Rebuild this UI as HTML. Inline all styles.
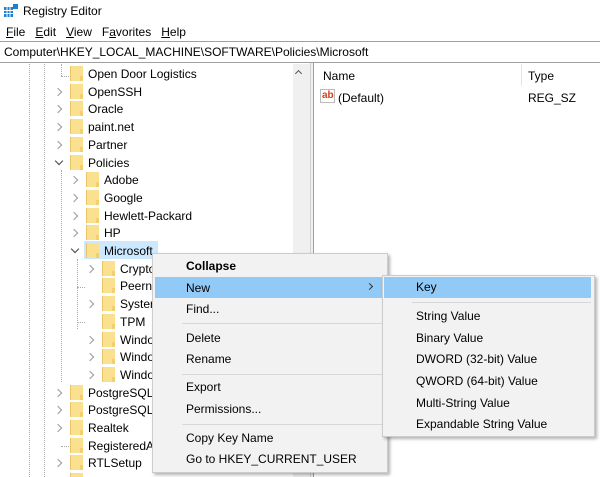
<!DOCTYPE html>
<html><head><style>
*{margin:0;padding:0;box-sizing:border-box}
html,body{width:600px;height:477px;overflow:hidden}
body{background:#fff;font-family:"Liberation Sans",sans-serif;font-size:12px;color:#000;position:relative}
.a{position:absolute;white-space:nowrap}
.f{position:absolute;width:13px;height:15px;background:#fbe08f;border-left:1px solid #e9c565}
.f:after{content:"";position:absolute;right:0;bottom:0;width:3px;height:5px;background:#f3cf6d}
.c{position:absolute;width:6px;height:6px;border-right:1.2px solid #999;border-bottom:1.2px solid #999;transform:rotate(-45deg)}
.d{position:absolute;width:6px;height:6px;border-right:1.2px solid #444;border-bottom:1.2px solid #444;transform:rotate(45deg)}
.vl{position:absolute;border-left:1px dotted #aaa}
.hl{position:absolute;border-top:1px dotted #aaa;width:8px}
.sep{position:absolute;height:1px;background:#d7d7d7}
</style></head><body>
<div class="a" style="left:4px;top:4px;width:14px;height:13px">
<svg width="14" height="13"><rect x="0" y="3" width="9" height="10" fill="#1e7fd0"/><g stroke="#fff" stroke-width="1"><line x1="3" y1="3" x2="3" y2="13"/><line x1="6" y1="3" x2="6" y2="13"/><line x1="0" y1="6.5" x2="9" y2="6.5"/><line x1="0" y1="9.5" x2="9" y2="9.5"/></g><rect x="9" y="0" width="5" height="5" fill="#1e7fd0"/></svg></div>
<div class="a" style="left:23px;top:4px">Registry Editor</div>
<div class="a" style="left:6px;top:25px"><u>F</u>ile&nbsp;&nbsp;&nbsp;<u>E</u>dit&nbsp;&nbsp;&nbsp;<u>V</u>iew&nbsp;&nbsp;&nbsp;F<u>a</u>vorites&nbsp;&nbsp;&nbsp;<u>H</u>elp</div>
<div class="a" style="left:0;top:41px;width:600px;height:22px;border:1px solid #a0a0a0;border-left:none;border-right:none"></div>
<div class="a" style="left:4px;top:45px">Computer\HKEY_LOCAL_MACHINE\SOFTWARE\Policies\Microsoft</div>
<div class="a" style="left:293px;top:64px;width:17px;height:413px;background:#f0f0f0"></div>
<div class="a" style="left:296px;top:71px;width:5px;height:5px;border-left:1.2px solid #555;border-top:1.2px solid #555;transform:rotate(45deg)"></div>
<div class="a" style="left:310px;top:63px;width:4px;height:414px;background:#f0f0f0;border-left:1px solid #d0d0d0;border-right:1px solid #a0a0a0"></div>
<div class="a" style="left:323px;top:69px">Name</div>
<div class="a" style="left:521px;top:64px;width:1px;height:22px;background:#e5e5e5"></div>
<div class="a" style="left:528px;top:69px">Type</div>
<div class="a" style="left:320px;top:89px;width:15px;height:14px;border:1px solid #bbb;background:#fff;font-size:10px;font-weight:bold;color:#d13f1c;line-height:11px;padding-left:1px">ab</div>
<div class="a" style="left:338px;top:91px">(Default)</div>
<div class="a" style="left:528px;top:91px">REG_SZ</div>
<div class="vl" style="left:29px;top:64px;height:413px"></div>
<div class="vl" style="left:44px;top:64px;height:413px"></div>
<div class="vl" style="left:61px;top:64px;height:12px"></div>
<div class="hl" style="left:61px;top:76px"></div>
<div class="vl" style="left:61px;top:170px;height:212px"></div>
<div class="hl" style="left:61px;top:446px"></div>
<div class="vl" style="left:77px;top:259px;height:70px"></div>
<div class="hl" style="left:77px;top:287px"></div>
<div class="hl" style="left:77px;top:322px"></div>
<div class="a" style="left:84px;top:241px;width:74px;height:18px;background:#cce8ff"></div>
<div id="t"></div>
<script>
var rows=[[0,'Open Door Logistics',''],[0,'OpenSSH','c'],[0,'Oracle','c'],[0,'paint.net','c'],[0,'Partner','c'],[0,'Policies','d'],[1,'Adobe','c'],[1,'Google','c'],[1,'Hewlett-Packard','c'],[1,'HP','c'],[1,'Microsoft','d'],[2,'Crypto','c'],[2,'Peerne',''],[2,'Syster','c'],[2,'TPM',''],[2,'Windo','c'],[2,'Windo','c'],[2,'Windo','c'],[0,'PostgreSQL','c'],[0,'PostgreSQL','c'],[0,'Realtek','c'],[0,'RegisteredA',''],[0,'RTLSetup','c'],[0,'','']];
var h='';
rows.forEach(function(r,i){var y=65+i*17.7;var x=70+r[0]*16;
h+='<div class="f" style="left:'+x+'px;top:'+(y+1)+'px"></div>';
if(r[1])h+='<div class="a" style="left:'+(x+18)+'px;top:'+(y+2)+'px">'+r[1]+'</div>';
if(r[2]=='c')h+='<div class="c" style="left:'+(x-15)+'px;top:'+(y+6)+'px"></div>';
if(r[2]=='d')h+='<div class="d" style="left:'+(x-14)+'px;top:'+(y+4)+'px"></div>';});
document.getElementById('t').innerHTML=h;
</script>
<div class="a" style="left:152px;top:253px;width:236px;height:220px;background:#f2f2f2;border:1px solid #ccc;box-shadow:2px 2px 3px rgba(0,0,0,.3)"></div>
<div class="a" style="left:155px;top:277px;width:229px;height:21px;background:#91c9f7"></div>
<div class="a" style="left:186px;top:259px;font-weight:bold">Collapse</div>
<div class="a" style="left:186px;top:281px">New</div>
<div class="a" style="left:367px;top:284px;width:5px;height:5px;border-right:1.2px solid #333;border-bottom:1.2px solid #333;transform:rotate(-45deg)"></div>
<div class="a" style="left:186px;top:302px">Find...</div>
<div class="sep" style="left:182px;top:323px;width:202px"></div>
<div class="a" style="left:186px;top:331px">Delete</div>
<div class="a" style="left:186px;top:352px">Rename</div>
<div class="sep" style="left:182px;top:374px;width:202px"></div>
<div class="a" style="left:186px;top:380px">Export</div>
<div class="a" style="left:186px;top:402px">Permissions...</div>
<div class="sep" style="left:182px;top:424px;width:202px"></div>
<div class="a" style="left:186px;top:431px">Copy Key Name</div>
<div class="a" style="left:186px;top:452px">Go to HKEY_CURRENT_USER</div>
<div class="a" style="left:382px;top:275px;width:213px;height:162px;background:#f2f2f2;border:1px solid #ccc;box-shadow:2px 2px 3px rgba(0,0,0,.3)"></div>
<div class="a" style="left:384px;top:277px;width:207px;height:21px;background:#91c9f7"></div>
<div class="a" style="left:416px;top:280px">Key</div>
<div class="sep" style="left:412px;top:302px;width:179px"></div>
<div class="a" style="left:416px;top:309px">String Value</div>
<div class="a" style="left:416px;top:331px">Binary Value</div>
<div class="a" style="left:416px;top:352px">DWORD (32-bit) Value</div>
<div class="a" style="left:416px;top:374px">QWORD (64-bit) Value</div>
<div class="a" style="left:416px;top:396px">Multi-String Value</div>
<div class="a" style="left:416px;top:417px">Expandable String Value</div>
</body></html>
